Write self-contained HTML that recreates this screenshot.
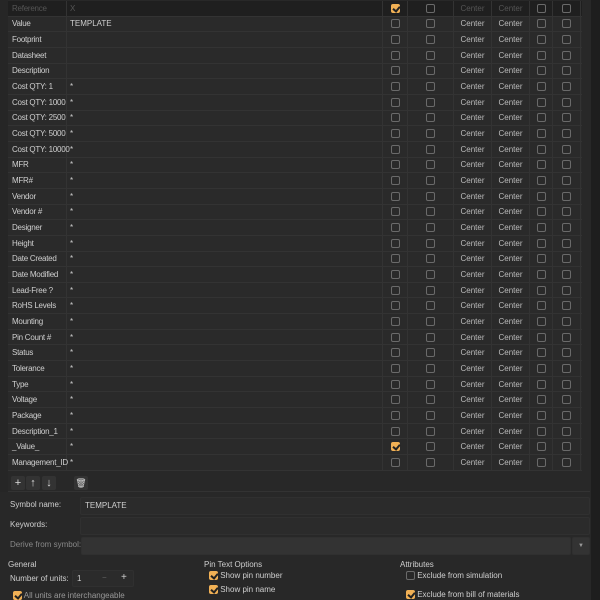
<!DOCTYPE html>
<html><head><meta charset="utf-8"><style>
*{box-sizing:border-box;margin:0;padding:0}
body{width:600px;height:600px;background:#282828;font-family:"Liberation Sans",sans-serif;font-size:8px;color:#cfcfcf;position:relative;overflow:hidden;white-space:nowrap}
.tbl{position:absolute;left:8px;top:1px;width:574px;background:#2a2a2a}
.r{display:flex;height:15.66px;border-bottom:1px solid #333;align-items:center}
.r>div{height:100%;display:flex;align-items:center;border-right:1px solid #333;overflow:visible}
.n{width:59px;padding-left:4px;letter-spacing:-0.25px}
.v{width:316px;padding-left:3px}
.c1{width:25px;justify-content:center}
.c2{width:46px;justify-content:center}
.c3{width:38px;justify-content:center;color:#bbb}
.c4{width:38px;justify-content:center;color:#bbb}
.c5{width:23px;justify-content:center}
.c6{width:28px;justify-content:center}
.cb{width:9px;height:9px;border:1px solid #6a6a6a;border-radius:2px;display:inline-block;position:relative}
.ck{background:#f2b155;border-color:#f2b155}
.ck:after{content:"";position:absolute;left:2px;top:0px;width:3px;height:5px;border:solid #222;border-width:0 2px 2px 0;transform:rotate(40deg)}
.sel{background:#1f1f1f;color:#555}
.sel .c3,.sel .c4{color:#555}
.a{position:absolute}
.btn{position:absolute;top:476px;width:14px;height:14px;background:#333;border-radius:2px;color:#ddd;font-size:11px;text-align:center;line-height:14px}
.inp{position:absolute;background:#2b2b2b;border:1px solid #303030;border-radius:2px}
.sb{position:absolute;right:0;top:0;width:9px;height:600px;background:#1e1e1e}
</style></head><body>
<div class="sb"></div>
<div class="a" style="left:0;top:0;width:8px;height:492px;background:#262626"></div>
<div class="tbl">
<div class="r sel"><div class="n">Reference</div><div class="v">X</div><div class="c1"><span class="cb ck"></span></div><div class="c2"><span class="cb"></span></div><div class="c3">Center</div><div class="c4">Center</div><div class="c5"><span class="cb"></span></div><div class="c6"><span class="cb"></span></div></div>
<div class="r"><div class="n">Value</div><div class="v">TEMPLATE</div><div class="c1"><span class="cb"></span></div><div class="c2"><span class="cb"></span></div><div class="c3">Center</div><div class="c4">Center</div><div class="c5"><span class="cb"></span></div><div class="c6"><span class="cb"></span></div></div>
<div class="r"><div class="n">Footprint</div><div class="v"></div><div class="c1"><span class="cb"></span></div><div class="c2"><span class="cb"></span></div><div class="c3">Center</div><div class="c4">Center</div><div class="c5"><span class="cb"></span></div><div class="c6"><span class="cb"></span></div></div>
<div class="r"><div class="n">Datasheet</div><div class="v"></div><div class="c1"><span class="cb"></span></div><div class="c2"><span class="cb"></span></div><div class="c3">Center</div><div class="c4">Center</div><div class="c5"><span class="cb"></span></div><div class="c6"><span class="cb"></span></div></div>
<div class="r"><div class="n">Description</div><div class="v"></div><div class="c1"><span class="cb"></span></div><div class="c2"><span class="cb"></span></div><div class="c3">Center</div><div class="c4">Center</div><div class="c5"><span class="cb"></span></div><div class="c6"><span class="cb"></span></div></div>
<div class="r"><div class="n">Cost QTY: 1</div><div class="v">*</div><div class="c1"><span class="cb"></span></div><div class="c2"><span class="cb"></span></div><div class="c3">Center</div><div class="c4">Center</div><div class="c5"><span class="cb"></span></div><div class="c6"><span class="cb"></span></div></div>
<div class="r"><div class="n">Cost QTY: 1000</div><div class="v">*</div><div class="c1"><span class="cb"></span></div><div class="c2"><span class="cb"></span></div><div class="c3">Center</div><div class="c4">Center</div><div class="c5"><span class="cb"></span></div><div class="c6"><span class="cb"></span></div></div>
<div class="r"><div class="n">Cost QTY: 2500</div><div class="v">*</div><div class="c1"><span class="cb"></span></div><div class="c2"><span class="cb"></span></div><div class="c3">Center</div><div class="c4">Center</div><div class="c5"><span class="cb"></span></div><div class="c6"><span class="cb"></span></div></div>
<div class="r"><div class="n">Cost QTY: 5000</div><div class="v">*</div><div class="c1"><span class="cb"></span></div><div class="c2"><span class="cb"></span></div><div class="c3">Center</div><div class="c4">Center</div><div class="c5"><span class="cb"></span></div><div class="c6"><span class="cb"></span></div></div>
<div class="r"><div class="n">Cost QTY: 10000</div><div class="v">*</div><div class="c1"><span class="cb"></span></div><div class="c2"><span class="cb"></span></div><div class="c3">Center</div><div class="c4">Center</div><div class="c5"><span class="cb"></span></div><div class="c6"><span class="cb"></span></div></div>
<div class="r"><div class="n">MFR</div><div class="v">*</div><div class="c1"><span class="cb"></span></div><div class="c2"><span class="cb"></span></div><div class="c3">Center</div><div class="c4">Center</div><div class="c5"><span class="cb"></span></div><div class="c6"><span class="cb"></span></div></div>
<div class="r"><div class="n">MFR#</div><div class="v">*</div><div class="c1"><span class="cb"></span></div><div class="c2"><span class="cb"></span></div><div class="c3">Center</div><div class="c4">Center</div><div class="c5"><span class="cb"></span></div><div class="c6"><span class="cb"></span></div></div>
<div class="r"><div class="n">Vendor</div><div class="v">*</div><div class="c1"><span class="cb"></span></div><div class="c2"><span class="cb"></span></div><div class="c3">Center</div><div class="c4">Center</div><div class="c5"><span class="cb"></span></div><div class="c6"><span class="cb"></span></div></div>
<div class="r"><div class="n">Vendor #</div><div class="v">*</div><div class="c1"><span class="cb"></span></div><div class="c2"><span class="cb"></span></div><div class="c3">Center</div><div class="c4">Center</div><div class="c5"><span class="cb"></span></div><div class="c6"><span class="cb"></span></div></div>
<div class="r"><div class="n">Designer</div><div class="v">*</div><div class="c1"><span class="cb"></span></div><div class="c2"><span class="cb"></span></div><div class="c3">Center</div><div class="c4">Center</div><div class="c5"><span class="cb"></span></div><div class="c6"><span class="cb"></span></div></div>
<div class="r"><div class="n">Height</div><div class="v">*</div><div class="c1"><span class="cb"></span></div><div class="c2"><span class="cb"></span></div><div class="c3">Center</div><div class="c4">Center</div><div class="c5"><span class="cb"></span></div><div class="c6"><span class="cb"></span></div></div>
<div class="r"><div class="n">Date Created</div><div class="v">*</div><div class="c1"><span class="cb"></span></div><div class="c2"><span class="cb"></span></div><div class="c3">Center</div><div class="c4">Center</div><div class="c5"><span class="cb"></span></div><div class="c6"><span class="cb"></span></div></div>
<div class="r"><div class="n">Date Modified</div><div class="v">*</div><div class="c1"><span class="cb"></span></div><div class="c2"><span class="cb"></span></div><div class="c3">Center</div><div class="c4">Center</div><div class="c5"><span class="cb"></span></div><div class="c6"><span class="cb"></span></div></div>
<div class="r"><div class="n">Lead-Free ?</div><div class="v">*</div><div class="c1"><span class="cb"></span></div><div class="c2"><span class="cb"></span></div><div class="c3">Center</div><div class="c4">Center</div><div class="c5"><span class="cb"></span></div><div class="c6"><span class="cb"></span></div></div>
<div class="r"><div class="n">RoHS Levels</div><div class="v">*</div><div class="c1"><span class="cb"></span></div><div class="c2"><span class="cb"></span></div><div class="c3">Center</div><div class="c4">Center</div><div class="c5"><span class="cb"></span></div><div class="c6"><span class="cb"></span></div></div>
<div class="r"><div class="n">Mounting</div><div class="v">*</div><div class="c1"><span class="cb"></span></div><div class="c2"><span class="cb"></span></div><div class="c3">Center</div><div class="c4">Center</div><div class="c5"><span class="cb"></span></div><div class="c6"><span class="cb"></span></div></div>
<div class="r"><div class="n">Pin Count #</div><div class="v">*</div><div class="c1"><span class="cb"></span></div><div class="c2"><span class="cb"></span></div><div class="c3">Center</div><div class="c4">Center</div><div class="c5"><span class="cb"></span></div><div class="c6"><span class="cb"></span></div></div>
<div class="r"><div class="n">Status</div><div class="v">*</div><div class="c1"><span class="cb"></span></div><div class="c2"><span class="cb"></span></div><div class="c3">Center</div><div class="c4">Center</div><div class="c5"><span class="cb"></span></div><div class="c6"><span class="cb"></span></div></div>
<div class="r"><div class="n">Tolerance</div><div class="v">*</div><div class="c1"><span class="cb"></span></div><div class="c2"><span class="cb"></span></div><div class="c3">Center</div><div class="c4">Center</div><div class="c5"><span class="cb"></span></div><div class="c6"><span class="cb"></span></div></div>
<div class="r"><div class="n">Type</div><div class="v">*</div><div class="c1"><span class="cb"></span></div><div class="c2"><span class="cb"></span></div><div class="c3">Center</div><div class="c4">Center</div><div class="c5"><span class="cb"></span></div><div class="c6"><span class="cb"></span></div></div>
<div class="r"><div class="n">Voltage</div><div class="v">*</div><div class="c1"><span class="cb"></span></div><div class="c2"><span class="cb"></span></div><div class="c3">Center</div><div class="c4">Center</div><div class="c5"><span class="cb"></span></div><div class="c6"><span class="cb"></span></div></div>
<div class="r"><div class="n">Package</div><div class="v">*</div><div class="c1"><span class="cb"></span></div><div class="c2"><span class="cb"></span></div><div class="c3">Center</div><div class="c4">Center</div><div class="c5"><span class="cb"></span></div><div class="c6"><span class="cb"></span></div></div>
<div class="r"><div class="n">Description_1</div><div class="v">*</div><div class="c1"><span class="cb"></span></div><div class="c2"><span class="cb"></span></div><div class="c3">Center</div><div class="c4">Center</div><div class="c5"><span class="cb"></span></div><div class="c6"><span class="cb"></span></div></div>
<div class="r"><div class="n">_Value_</div><div class="v">*</div><div class="c1"><span class="cb ck"></span></div><div class="c2"><span class="cb"></span></div><div class="c3">Center</div><div class="c4">Center</div><div class="c5"><span class="cb"></span></div><div class="c6"><span class="cb"></span></div></div>
<div class="r"><div class="n">Management_ID</div><div class="v">*</div><div class="c1"><span class="cb"></span></div><div class="c2"><span class="cb"></span></div><div class="c3">Center</div><div class="c4">Center</div><div class="c5"><span class="cb"></span></div><div class="c6"><span class="cb"></span></div></div>
</div>
<div class="a" style="left:8px;top:470px;width:582px;height:22px;border-bottom:1px solid #333"></div>
<div class="btn" style="left:11px">+</div>
<div class="btn" style="left:26px">↑</div>
<div class="btn" style="left:42px">↓</div>
<div class="btn" style="left:74px;font-size:9px">🗑</div>
<div class="a" style="left:10px;top:500px">Symbol name:</div>
<div class="inp" style="left:80px;top:497px;width:510px;height:18px"></div>
<div class="a" style="left:85px;top:501px">TEMPLATE</div>
<div class="a" style="left:10px;top:520px">Keywords:</div>
<div class="inp" style="left:80px;top:517px;width:510px;height:18px"></div>
<div class="a" style="left:10px;top:540px;color:#888">Derive from symbol:</div>
<div class="inp" style="left:81px;top:537px;width:490px;height:18px;background:#333"></div>
<div class="inp" style="left:572px;top:537px;width:18px;height:18px;background:#333;color:#999;text-align:center;font-size:6px;line-height:17px">▼</div>
<div class="a" style="left:8px;top:560px">General</div>
<div class="a" style="left:10px;top:574px">Number of units:</div>
<div class="inp" style="left:72px;top:570px;width:62px;height:17px"></div>
<div class="a" style="left:77px;top:574px">1</div>
<div class="a" style="left:102px;top:573px;color:#666">−</div>
<div class="a" style="left:121px;top:572px;font-size:10px">+</div>
<div class="a" style="left:13px;top:591px"><span class="cb ck" style="vertical-align:middle"></span> <span style="color:#999">All units are interchangeable</span></div>
<div class="a" style="left:204px;top:560px">Pin Text Options</div>
<div class="a" style="left:209px;top:571px"><span class="cb ck" style="vertical-align:middle"></span> Show pin number</div>
<div class="a" style="left:209px;top:585px"><span class="cb ck" style="vertical-align:middle"></span> Show pin name</div>
<div class="a" style="left:400px;top:560px">Attributes</div>
<div class="a" style="left:406px;top:571px"><span class="cb" style="vertical-align:middle"></span> Exclude from simulation</div>
<div class="a" style="left:406px;top:590px"><span class="cb ck" style="vertical-align:middle"></span> Exclude from bill of materials</div>
</body></html>
